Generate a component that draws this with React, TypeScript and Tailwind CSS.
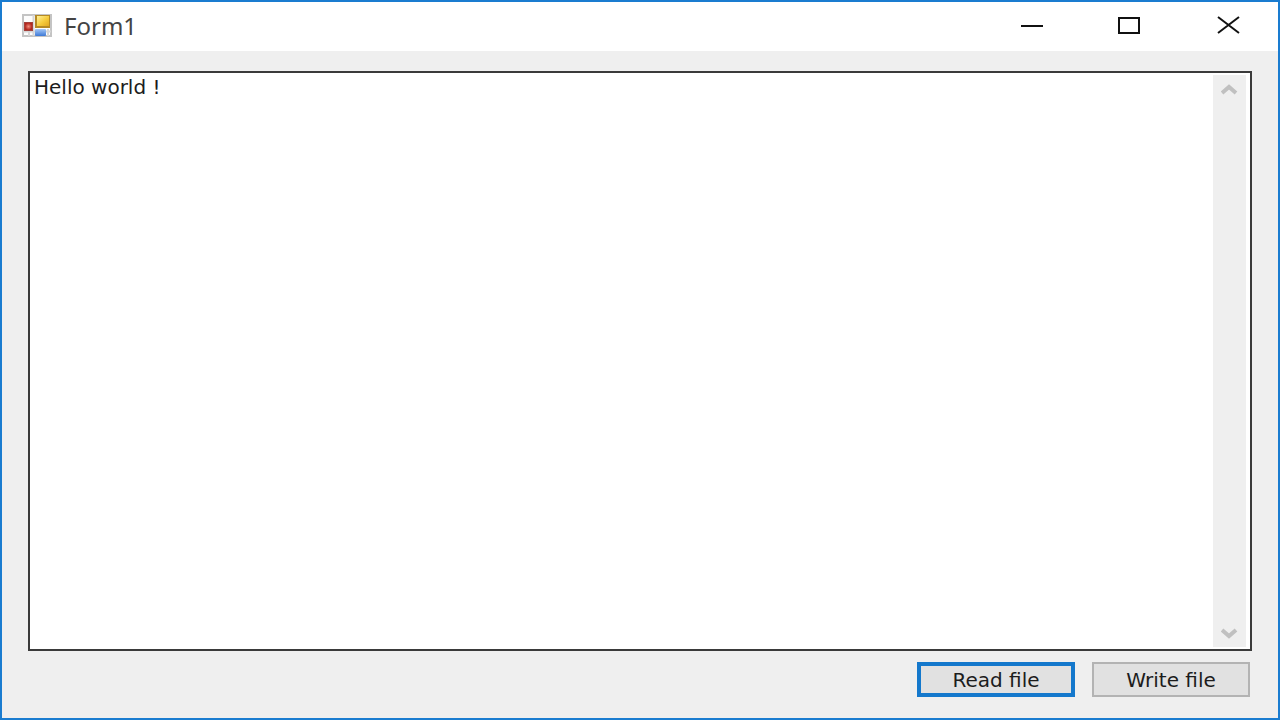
import { useState } from 'react';

function FormIcon() {
  return (
    <svg width="30" height="24" viewBox="0 0 30 24" aria-hidden="true">
      <defs>
        <linearGradient id="gold" x1="0" y1="0" x2="1" y2="1">
          <stop offset="0" stopColor="#fff09a" />
          <stop offset="0.55" stopColor="#f5cb3c" />
          <stop offset="1" stopColor="#e0a822" />
        </linearGradient>
        <linearGradient id="blue" x1="0" y1="0" x2="0" y2="1">
          <stop offset="0" stopColor="#a5c8f6" />
          <stop offset="1" stopColor="#3d78d6" />
        </linearGradient>
        <radialGradient id="red">
          <stop offset="0" stopColor="#f08c7c" />
          <stop offset="1" stopColor="#b3281e" />
        </radialGradient>
      </defs>
      <rect x="1" y="1" width="28" height="21" fill="#fdfdfd" stroke="#c4c4c4" strokeWidth="2" />
      <path d="M11.500 1v21M1 17.500h28M7 17v5M26 15v7" stroke="#d6d6d6" strokeWidth="2" />
      <rect x="2" y="8" width="9" height="9" fill="#a3403a" />
      <rect x="3" y="9" width="7" height="7" fill="url(#red)" />
      <rect x="13" y="1" width="15" height="13" fill="#b58a25" />
      <rect x="15" y="2" width="12" height="10" fill="url(#gold)" />
      <rect x="13" y="15" width="11" height="7" rx="1" fill="url(#blue)" />
    </svg>
  );
}

export default function App() {
  const [text, setText] = useState('Hello world !');

  return (
    <div className="flex h-screen flex-col border-2 border-[#1a7cd0] bg-[#efefef] font-['DejaVu_Sans','Liberation_Sans',sans-serif] text-xl text-[#1c1c1c]">
      {/* Title bar */}
      <header className="flex h-[49px] shrink-0 items-center bg-white pb-0.5 pl-5">
        <FormIcon />
        <h1 className="ml-3 flex-1 font-['Noto_Sans','Liberation_Sans',sans-serif] text-2xl text-[#444]">
          Form1
        </h1>
        <div className="flex h-full">
          <button aria-label="Minimize" className="flex w-[98px] items-center justify-center">
            <svg width="24" height="20" viewBox="0 0 24 20">
              <path d="M2 10h22" stroke="#111" strokeWidth="2" />
            </svg>
          </button>
          <button aria-label="Maximize" className="flex w-[98px] items-center justify-center">
            <svg width="24" height="20" viewBox="0 0 24 20">
              <rect x="2" y="2" width="20" height="15" fill="none" stroke="#111" strokeWidth="2" />
            </svg>
          </button>
          <button aria-label="Close" className="flex w-[100px] items-center justify-center">
            <svg width="24" height="20" viewBox="0 0 24 20">
              <path d="M2 1l21 16M23 1L2 17" stroke="#111" strokeWidth="2" />
            </svg>
          </button>
        </div>
      </header>

      <main className="flex flex-1 flex-col px-[26px] pt-5 pb-[21px]">
        {/* Text box with its scroll bar */}
        <div className="flex flex-1 border-2 border-[#3a3a3a] bg-white">
          <textarea
            aria-label="File content"
            value={text}
            onChange={(e) => setText(e.target.value)}
            spellCheck={false}
            className="flex-1 resize-none px-1 py-0.5 leading-6 outline-none"
          />
          <div className="my-0.5 mr-1 flex w-[33px] flex-col items-center justify-between bg-[#efefef] py-2">
            <button aria-label="Scroll up">
              <svg width="18" height="12" viewBox="0 0 18 12" className="block">
                <path d="M1 10l7-6 7 6" fill="none" stroke="#c0c0c0" strokeWidth="4" />
              </svg>
            </button>
            <button aria-label="Scroll down">
              <svg width="18" height="12" viewBox="0 0 18 12" className="block">
                <path d="M1 3l7 6 7-6" fill="none" stroke="#c0c0c0" strokeWidth="4" />
              </svg>
            </button>
          </div>
        </div>

        <div className="mt-[11px] flex justify-end gap-[17px] pr-0.5">
          <button className="h-[35px] w-[158px] border-4 border-[#1478cc] bg-[#e1e1e1] leading-6">
            Read file
          </button>
          <button className="h-[35px] w-[158px] border-2 border-[#b3b3b3] bg-[#e1e1e1] leading-6">
            Write file
          </button>
        </div>
      </main>
    </div>
  );
}
